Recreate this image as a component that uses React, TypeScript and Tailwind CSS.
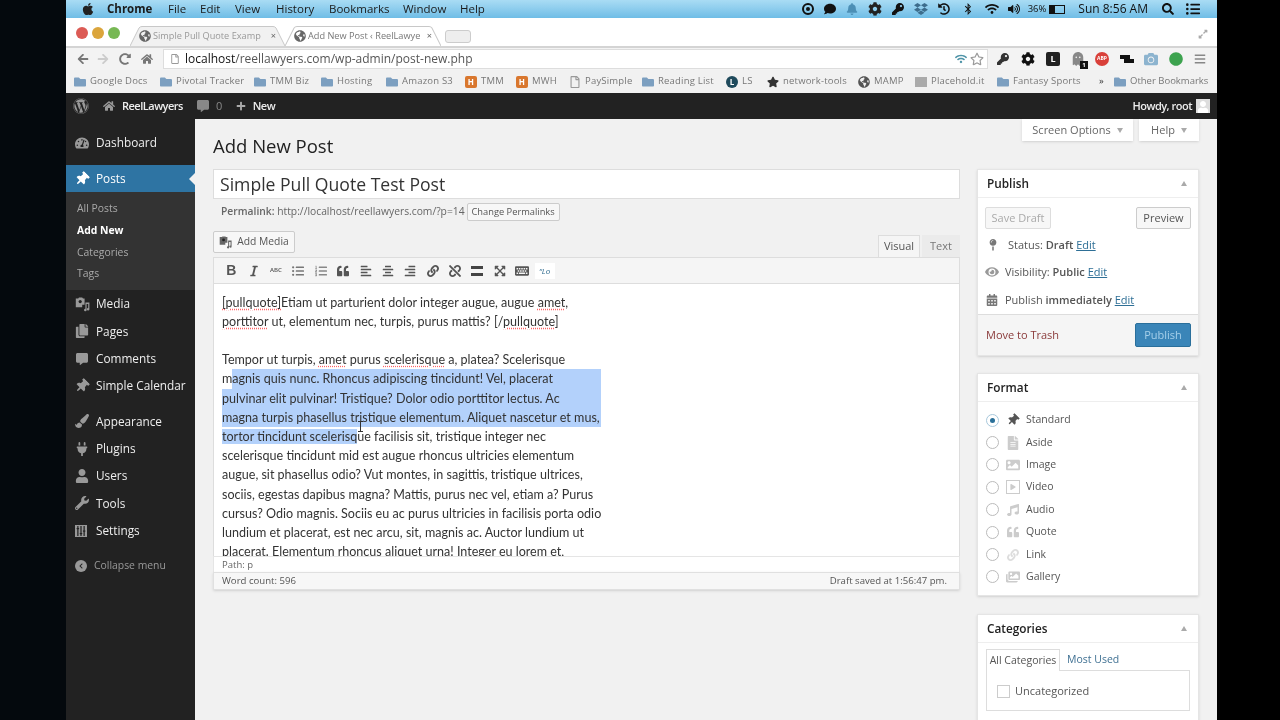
import type { ReactNode } from 'react'
import {
  FaAlignCenter, FaAlignLeft, FaAlignRight, FaApple, FaBell, FaBluetoothB, FaCalendarAlt, FaCamera, FaChevronLeft,
  FaCircle, FaComment, FaCommentAlt, FaCopy, FaDropbox, FaExpandAlt, FaExpandArrowsAlt, FaEye, FaFolder, FaGlobeAmericas, FaHistory, FaHome,
  FaImage, FaImages, FaItalic, FaKey, FaKeyboard, FaLink, FaListOl, FaListUl, FaMapPin, FaMusic, FaPaintBrush,
  FaPlay, FaPlug, FaPlus, FaQuoteLeft, FaSearch, FaSlidersH, FaStar, FaTachometerAlt, FaThumbtack, FaUnlink, FaUser,
  FaVolumeUp, FaWifi, FaWordpress, FaWrench, FaArrowLeft, FaArrowRight, FaRedoAlt, FaBars, FaCog, FaGhost, FaFileAlt,
  FaRegFile, FaRegStar,
} from 'react-icons/fa'

const sans = 'font-["Open_Sans",sans-serif]'

function MediaIcon({ className }: { className?: string }) {
  return (
    <svg viewBox="0 0 20 20" className={className} fill="currentColor">
      <path d="M1 3h3l1-1h4l1 1h2v8H9v3H1z" />
      <circle cx="6.5" cy="7" r="2" fill="#222" />
      <path d="M13 8h5v8.5a1.6 1.6 0 1 1-1.5-1.5v-5h-2v7.5a1.6 1.6 0 1 1-1.5-1.5z" />
    </svg>
  )
}

// slanted chrome tab outline
function TabShape({ fill }: { fill: string }) {
  return (
    <svg viewBox="0 0 155 20" preserveAspectRatio="none" className="absolute inset-0 h-full w-full">
      <path d="M0 20 L9 2 Q10 .5 12 .5 L143 .5 Q145 .5 146 2 L155 20" fill={fill} stroke="#c8c8c8" />
    </svg>
  )
}

const menuTop = [
  { label: 'Chrome', cls: 'w-[61px] font-bold' },
  { label: 'File', cls: 'w-[32px]' },
  { label: 'Edit', cls: 'w-[35px]' },
  { label: 'View', cls: 'w-[41px]' },
  { label: 'History', cls: 'w-[53px]' },
  { label: 'Bookmarks', cls: 'w-[74px]' },
  { label: 'Window', cls: 'w-[57px]' },
  { label: 'Help', cls: 'w-[30px]' },
]

const bookmarks: { label: string; cls: string; icon: ReactNode }[] = [
  { label: 'Google Docs', cls: 'w-[86px]', icon: <FaFolder className="text-[#7c9fc0]" /> },
  { label: 'Pivotal Tracker', cls: 'w-[94px]', icon: <FaFolder className="text-[#7c9fc0]" /> },
  { label: 'TMM Biz', cls: 'w-[67px]', icon: <FaFolder className="text-[#7c9fc0]" /> },
  { label: 'Hosting', cls: 'w-[65px]', icon: <FaFolder className="text-[#7c9fc0]" /> },
  { label: 'Amazon S3', cls: 'w-[79px]', icon: <FaFolder className="text-[#7c9fc0]" /> },
  { label: 'TMM', cls: 'w-[51px]', icon: <span className="flex h-3 w-3 items-center justify-center rounded-[2px] bg-[#d9772e] text-[8px] font-bold text-white">H</span> },
  { label: 'MWH', cls: 'w-[53px]', icon: <span className="flex h-3 w-3 items-center justify-center rounded-[2px] bg-[#d9772e] text-[8px] font-bold text-white">H</span> },
  { label: 'PaySimple', cls: 'w-[73px]', icon: <FaRegFile className="text-[#999]" /> },
  { label: 'Reading List', cls: 'w-[84px]', icon: <FaFolder className="text-[#7c9fc0]" /> },
  { label: 'LS', cls: 'w-[41px]', icon: <span className="flex h-3 w-3 items-center justify-center rounded-full bg-[#1f4a5c] text-[8px] font-bold text-white">L</span> },
  { label: 'network-tools', cls: 'w-[91px]', icon: <FaStar className="text-[#333]" /> },
  { label: 'MAMP', cls: 'w-[57px]', icon: <FaGlobeAmericas className="text-[#555]" /> },
  { label: 'Placehold.it', cls: 'w-[82px]', icon: <span className="block h-2.5 w-3 bg-[#aaa]" /> },
  { label: 'Fantasy Sports', cls: 'w-[102px]', icon: <FaFolder className="text-[#7c9fc0]" /> },
]

const sideMain: { label: string; icon: ReactNode }[] = [
  { label: 'Media', icon: <MediaIcon className="h-4 w-4" /> },
  { label: 'Pages', icon: <FaCopy className="h-3.5 w-3.5" /> },
  { label: 'Comments', icon: <FaCommentAlt className="h-3 w-3.5" /> },
  { label: 'Simple Calendar', icon: <FaThumbtack className="h-3.5 w-3.5 rotate-45" /> },
]

const sideTools: { label: string; icon: ReactNode }[] = [
  { label: 'Appearance', icon: <FaPaintBrush className="h-3.5 w-3.5" /> },
  { label: 'Plugins', icon: <FaPlug className="h-3.5 w-3.5" /> },
  { label: 'Users', icon: <FaUser className="h-3.5 w-3.5" /> },
  { label: 'Tools', icon: <FaWrench className="h-3.5 w-3.5" /> },
  {
    label: 'Settings',
    icon: (
      <span className="flex h-3 w-3 items-center justify-center bg-[#999]">
        <FaSlidersH className="h-2.5 w-2.5 rotate-90 text-[#222]" />
      </span>
    ),
  },
]

function SideRow({ label, icon }: { label: string; icon: ReactNode }) {
  return (
    <div className="flex h-[27.35px] items-center pl-[9px] text-[11.8px] text-[#eee]">
      <span className="flex w-[21px] items-center text-[#999]">{icon}</span>
      {label}
    </div>
  )
}

const toolbar: ReactNode[] = [
  <span className="font-['Liberation_Sans'] text-[14px] font-bold">B</span>,
  <FaItalic className="h-3 w-3" />,
  <span className="text-[6px] font-semibold">ABC</span>,
  <FaListUl className="h-3 w-3 text-[#777]" />,
  <FaListOl className="h-3 w-3 text-[#888]" />,
  <FaQuoteLeft className="h-3 w-3" />,
  <FaAlignLeft className="h-3 w-3" />,
  <FaAlignCenter className="h-3 w-3" />,
  <FaAlignRight className="h-3 w-3" />,
  <FaLink className="h-3 w-3" />,
  <FaUnlink className="h-3 w-3" />,
  <span className="flex h-2.5 w-3 flex-col justify-between"><span className="h-[3px] bg-[#444]" /><span className="h-[3px] bg-[#444]" /></span>,
  <FaExpandArrowsAlt className="h-3 w-3" />,
  <FaKeyboard className="h-3.5 w-3.5" />,
  <span className="flex h-4 w-5 items-center justify-center bg-white text-[8px] italic text-[#2d6a8e]">“Lo</span>,
]

const formats: { label: string; icon: ReactNode }[] = [
  { label: 'Standard', icon: <FaThumbtack className="h-3 w-3 rotate-45 text-[#555]" /> },
  { label: 'Aside', icon: <FaFileAlt className="h-3.5 w-3.5 text-[#ccc]" /> },
  { label: 'Image', icon: <FaImage className="h-3.5 w-3.5 text-[#ccc]" /> },
  {
    label: 'Video',
    icon: (
      <span className="flex h-3.5 w-3.5 items-center justify-center border border-[#ccc]">
        <FaPlay className="h-1.5 w-1.5 text-[#ccc]" />
      </span>
    ),
  },
  { label: 'Audio', icon: <FaMusic className="h-3 w-3 text-[#ccc]" /> },
  { label: 'Quote', icon: <FaQuoteLeft className="h-3 w-3 text-[#ccc]" /> },
  { label: 'Link', icon: <FaLink className="h-3 w-3 text-[#ddd]" /> },
  { label: 'Gallery', icon: <FaImages className="h-3.5 w-3.5 text-[#ccc]" /> },
]

function Spell({ children }: { children: ReactNode }) {
  return <span className="underline decoration-red-400 decoration-dotted underline-offset-2">{children}</span>
}

function BoxHead({ title }: { title: string }) {
  return (
    <div className="flex h-[28px] items-center justify-between border-b border-[#eee] pl-[9px] pr-[11px]">
      <span className="text-[11.8px] font-semibold text-[#222]">{title}</span>
      <span className="h-0 w-0 border-x-[3px] border-b-[5px] border-x-transparent border-b-[#aaa]" />
    </div>
  )
}

function Sel({ children }: { children: ReactNode }) {
  return <div className="w-[379px] whitespace-nowrap bg-[#b3d1fb]">{children}</div>
}

export default function App() {
  return (
    <div className={`flex h-[720px] w-[1280px] overflow-hidden bg-black blur-[0.3px] ${sans}`}>
      <div className="w-[66px] shrink-0 bg-[#04090d]" />
      <div className="flex w-[1151px] shrink-0 flex-col">
        {/* mac menu bar */}
        <div className="flex h-[18px] shrink-0 items-center bg-gradient-to-b from-[#a9dcf4] to-[#6fbde6] text-[11.5px] text-[#1a1a1a]">
          <FaApple className="ml-[15px] mr-[12px] h-3.5 w-3.5 text-[#222]" />
          {menuTop.map((m) => (
            <span key={m.label} className={m.cls}>{m.label}</span>
          ))}
          <div className="ml-auto flex items-center pr-[17px] text-[#111]">
            <span className="mr-[10px] flex h-3 w-3 items-center justify-center rounded-full border-2 border-[#111]"><span className="h-1 w-1 rounded-full bg-[#111]" /></span>
            <FaComment className="mr-[10px] h-3 w-3" />
            <FaBell className="mr-[10px] h-3 w-3 text-[#4c8fb5]" />
            <FaCog className="mr-[10px] h-3.5 w-3.5 text-[#222]" />
            <FaKey className="mr-[10px] h-3 w-3" />
            <FaDropbox className="mr-[10px] h-3.5 w-3.5 text-[#3d6d8c]" />
            <FaHistory className="mr-[12px] h-3 w-3" />
            <FaBluetoothB className="mr-[11px] h-3 w-3" />
            <FaWifi className="mr-[9px] h-3.5 w-3.5" />
            <FaVolumeUp className="mr-[8px] h-3 w-3" />
            <span className="mr-[3px] text-[9.5px]">36%</span>
            <span className="mr-[13px] block h-[9px] w-[16px] border border-[#111] bg-gradient-to-r from-[#111] from-35% to-transparent to-35%" />
            <span className="mr-[14px] text-[12px]">Sun 8:56 AM</span>
            <FaSearch className="mr-[12px] h-3 w-3" />
            <FaListUl className="h-3.5 w-3.5" />
          </div>
        </div>

        {/* tab strip */}
        <div className="flex h-[28px] shrink-0 items-end bg-white pl-[10px]">
          <div className="mb-[7px] mr-[10px] flex gap-[3px] self-end">
            <span className="h-3 w-3 rounded-full bg-[#dc5b55]" />
            <span className="ml-[1px] h-3 w-3 rounded-full bg-[#dba53c]" />
            <span className="ml-[1px] h-3 w-3 rounded-full bg-[#77b854]" />
          </div>
          <div className="relative flex h-[20px] w-[155px] items-center pl-[9px] pr-[9px] text-[9.2px] text-[#999]">
            <TabShape fill="#f1f1f1" />
            <FaGlobeAmericas className="relative mr-[2px] h-3 w-3 shrink-0 text-[#666]" />
            <span className="relative flex-1 whitespace-nowrap">Simple Pull Quote Examp</span>
            <span className="relative text-[#666]">×</span>
          </div>
          <div className="relative flex h-[20px] w-[156px] items-center pl-[9px] pr-[9px] text-[9.2px] text-[#777]">
            <TabShape fill="#fff" />
            <FaGlobeAmericas className="relative mr-[2px] h-3 w-3 shrink-0 text-[#666]" />
            <span className="relative flex-1 whitespace-nowrap">Add New Post ‹ ReelLawye</span>
            <span className="relative text-[#666]">×</span>
          </div>
          <div className="mb-[3px] ml-[4px] h-[13px] w-[26px] rounded-[3px] border border-[#ccc] bg-[#eee]" />
          <div className="mb-[7px] ml-auto mr-[9px] text-[#aaa]"><FaExpandAlt className="h-2.5 w-2.5" /></div>
        </div>

        {/* chrome toolbar */}
        <div className="flex h-[24px] shrink-0 items-center border-t-2 border-[#d4d4d4] bg-[#f3f3f3] pl-[11px] text-[#777]">
          <FaArrowLeft className="h-3 w-3" />
          <FaArrowRight className="ml-[8px] h-3 w-3 text-[#ccc]" />
          <FaRedoAlt className="ml-[10px] h-3 w-3" />
          <FaHome className="ml-[10px] h-3 w-3" />
          <div className="ml-[10px] flex h-[20px] w-[825px] items-center border border-[#ddd] bg-white pl-[6px] pr-[3px] text-[12px] text-[#555]">
            <FaRegFile className="mr-[5px] h-2.5 w-2.5 text-[#999]" />
            <span><span className="text-[#111]">localhost</span>/reellawyers.com/wp-admin/post-new.php</span>
            <FaWifi className="ml-auto mr-[3px] h-3 w-3 text-[#4f94a8]" />
            <FaRegStar className="h-3.5 w-3.5 text-[#999]" />
          </div>
          <FaKey className="ml-[9px] h-3 w-3 text-[#333]" />
          <FaCog className="ml-[12px] h-3.5 w-3.5 text-[#111]" />
          <span className="ml-[11px] flex h-3.5 w-3.5 items-center justify-center rounded-[2px] bg-[#222] text-[9px] font-bold text-white">L</span>
          <span className="relative ml-[11px]">
            <FaGhost className="h-3.5 w-3.5 text-[#888]" />
            <span className="absolute -bottom-[3px] -right-[3px] flex h-[8px] w-[8px] items-center justify-center bg-[#111] text-[6px] font-bold leading-none text-white">1</span>
          </span>
          <span className="ml-[10px] flex h-3.5 w-3.5 items-center justify-center rounded-full bg-[#d9403a] text-[5px] font-bold text-white">ABP</span>
          <span className="ml-[11px] flex h-2 w-3.5 flex-col"><span className="h-1 w-2.5 bg-[#111]" /><span className="ml-1 h-1 w-2.5 bg-[#111]" /></span>
          <FaCamera className="ml-[10px] h-3.5 w-3.5 text-[#8db4cf]" />
          <FaCircle className="ml-[11px] h-3.5 w-3.5 text-[#3da34f]" />
          <FaBars className="ml-[11px] h-3 w-3 text-[#888]" />
        </div>

        {/* bookmarks */}
        <div className="flex h-[23px] shrink-0 items-center bg-[#f1f1f1] pl-[8px] text-[9.5px] tracking-[0.2px] text-[#777]">
          {bookmarks.map((b) => (
            <div key={b.label} className={`flex items-center gap-[4px] ${b.cls}`}>
              <span className="flex h-3 w-3 items-center justify-center text-[12px]">{b.icon}</span>
              {b.label}
            </div>
          ))}
          <span className="w-[15px] text-[#333]">»</span>
          <div className="flex items-center gap-[4px] tracking-normal">
            <FaFolder className="text-[12px] text-[#7c9fc0]" />
            Other Bookmarks
          </div>
        </div>

        {/* wp admin bar */}
        <div className="flex h-[26px] shrink-0 items-center bg-[#222] text-[11px] tracking-[-0.5px] text-[#eee]">
          <FaWordpress className="ml-[7px] h-4 w-4 text-[#999]" />
          <FaHome className="ml-[14px] h-3 w-3 text-[#999]" />
          <span className="ml-[7px] font-semibold">ReelLawyers</span>
          <FaCommentAlt className="ml-[14px] h-3 w-3 text-[#888]" />
          <span className="ml-[7px] text-[#888]">0</span>
          <FaPlus className="ml-[14px] h-2.5 w-2.5 text-[#aaa]" />
          <span className="ml-[7px] font-semibold">New</span>
          <span className="ml-auto font-semibold">Howdy, root</span>
          <span className="ml-[4px] mr-[7px] flex h-[14px] w-[14px] items-end justify-center overflow-hidden bg-[#ddd]"><FaUser className="h-3 w-3 text-white" /></span>
        </div>

        <div className="flex min-h-0 flex-1">
          {/* sidebar */}
          <aside className="w-[129px] shrink-0 bg-[#222]">
            <div className="pt-[10px]">
              <SideRow label="Dashboard" icon={<FaTachometerAlt className="h-3.5 w-3.5" />} />
            </div>
            <div className="relative mt-[9px] flex h-[27px] items-center bg-[#2e74a3] pl-[9px] text-[11.8px] text-white">
              <span className="flex w-[21px] items-center"><FaThumbtack className="h-3.5 w-3.5 rotate-45" /></span>
              Posts
              <span className="absolute right-0 top-[8px] h-0 w-0 border-y-[6px] border-r-[6px] border-y-transparent border-r-[#f1f1f1]" />
            </div>
            <div className="h-[98px] bg-[#333] pl-[11px] pt-[6px] text-[10.4px] leading-[21.6px] text-[#aaa]">
              <div>All Posts</div>
              <div className="font-bold text-white">Add New</div>
              <div>Categories</div>
              <div>Tags</div>
            </div>
            {sideMain.map((r) => <SideRow key={r.label} {...r} />)}
            <div className="mt-[8px]">
              {sideTools.map((r) => <SideRow key={r.label} {...r} />)}
            </div>
            <div className="mt-[8px] flex h-[27px] items-center pl-[9px] text-[10.4px] text-[#999]">
              <span className="mr-[7px] flex h-3 w-3 items-center justify-center rounded-full bg-[#999]"><FaChevronLeft className="h-1.5 w-1.5 text-[#222]" /></span>
              Collapse menu
            </div>
          </aside>

          {/* content */}
          <main className="flex min-w-0 flex-1 gap-[17px] overflow-hidden bg-[#f1f1f1] pl-[18px] text-[#444]">
            <div className="w-[747px] shrink-0">
              <h1 className="pt-[14px] text-[18.5px] leading-[26px] text-[#222]">Add New Post</h1>
              <div className="mt-[10px] flex h-[30px] items-center border border-[#ddd] bg-white pl-[6px] text-[17.6px] text-[#333]">
                Simple Pull Quote Test Post
              </div>
              <div className="mt-[4px] flex h-[18px] items-center pl-[8px] text-[10.3px] text-[#666]">
                <span className="font-semibold">Permalink:</span>&nbsp;http://localhost/reellawyers.com/?p=14
                <span className="ml-[2px] flex h-[18px] w-[93px] items-center justify-center rounded-[2px] border border-[#ccc] bg-[#f7f7f7] text-[9.3px] text-[#555]">Change Permalinks</span>
              </div>
              <div className="mt-[10px] flex h-[26px] items-start justify-between">
                <div className="flex h-[22px] w-[82px] items-center justify-center gap-[4px] rounded-[2px] border border-[#ccc] bg-[#f7f7f7] text-[10.3px] text-[#555]">
                  <MediaIcon className="h-3.5 w-3.5 text-[#666]" />
                  Add Media
                </div>
                <div className="mt-[4px] flex h-[22px] items-end text-[11px]">
                  <span className="flex h-[22px] w-[42px] items-center justify-center border border-b-0 border-[#ddd] bg-[#f5f5f5] text-[#555]">Visual</span>
                  <span className="ml-[2px] flex h-[22px] w-[38px] items-center justify-center bg-[#ebebeb] text-[#777]">Text</span>
                </div>
              </div>
              <div className="flex h-[27px] items-center border border-[#ddd] bg-[#f5f5f5] pl-[6px] text-[#555]">
                {toolbar.map((icon, i) => (
                  <span key={i} className="flex h-full w-[22.4px] items-center justify-center">{icon}</span>
                ))}
              </div>
              <div className="h-[272px] overflow-hidden border-x border-[#ddd] bg-white pl-[8px] pt-[8.6px] font-['Lato',sans-serif] text-[12.55px] leading-[19.2px] text-[#333]">
                <div className="relative whitespace-nowrap">
                  <div><Spell>[pullquote]</Spell>Etiam ut parturient dolor integer augue, augue <Spell>amet</Spell>,</div>
                  <div><Spell>porttitor</Spell> ut, elementum nec, turpis, purus mattis? [/<Spell>pullquote</Spell>]</div>
                  <div className="h-[19.2px]" />
                  <div>Tempor ut turpis, <Spell>amet</Spell> purus <Spell>scelerisque</Spell> a, platea? Scelerisque</div>
                  <div className="flex w-[379px]"><span>m</span><span className="flex-1 bg-[#b3d1fb]">agnis quis nunc. Rhoncus adipiscing tincidunt! Vel, placerat</span></div>
                  <Sel>pulvinar elit pulvinar! Tristique? Dolor odio porttitor lectus. Ac</Sel>
                  <Sel>magna turpis phasellus tristique elementum. Aliquet nascetur et mus,</Sel>
                  <div><span className="bg-[#b3d1fb]">tortor tincidunt scelerisq</span>ue facilisis sit, tristique integer nec</div>
                  <div>scelerisque tincidunt mid est augue rhoncus ultricies elementum</div>
                  <div>augue, sit phasellus odio? Vut montes, in sagittis, tristique ultrices,</div>
                  <div>sociis, egestas dapibus magna? Mattis, purus nec vel, etiam a? Purus</div>
                  <div>cursus? Odio magnis. Sociis eu ac purus ultricies in facilisis porta odio</div>
                  <div>lundium et placerat, est nec arcu, sit, magnis ac. Auctor lundium ut</div>
                  <div>placerat. Elementum rhoncus aliquet urna! Integer eu lorem et,</div>
                  <svg viewBox="0 0 7 11" className="absolute left-[135px] top-[128px] h-[11px] w-[7px]" fill="none" stroke="#333" strokeWidth="1">
                    <path d="M1 .5h5M3.5.5v10M1 10.5h5" />
                  </svg>
                </div>
              </div>
              <div className="flex h-[16px] items-center border-x border-t border-[#e5e5e5] bg-white pl-[8px] text-[9.5px] leading-none text-[#666]">Path: p</div>
              <div className="flex h-[18px] items-center justify-between border border-[#e0e0e0] bg-[#f7f7f7] pl-[8px] pr-[12px] text-[9.6px] leading-none text-[#555] shadow-sm">
                <span>Word count: 596</span>
                <span>Draft saved at 1:56:47 pm.</span>
              </div>
            </div>

            <div className="flex w-[240px] shrink-0 flex-col">
              <div className="flex h-[22px] shrink-0 justify-end gap-[6px] pr-[18px] text-[11px] text-[#666]">
                <div className="flex w-[111px] items-center justify-center gap-[6px] bg-white shadow-sm">
                  Screen Options
                  <span className="h-0 w-0 border-x-[3px] border-t-[5px] border-x-transparent border-t-[#aaa]" />
                </div>
                <div className="flex w-[60px] items-center justify-center gap-[6px] bg-white shadow-sm">
                  Help
                  <span className="h-0 w-0 border-x-[3px] border-t-[5px] border-x-transparent border-t-[#aaa]" />
                </div>
              </div>

              {/* publish box */}
              <div className="mt-[28px] w-[222px] shrink-0 border border-[#e5e5e5] bg-white shadow-sm">
                <BoxHead title="Publish" />
                <div className="flex justify-between px-[7px] pt-[9px]">
                  <span className="flex h-[22px] w-[66px] items-center justify-center rounded-[2px] border border-[#ddd] bg-[#f7f7f7] text-[11px] text-[#aaa]">Save Draft</span>
                  <span className="flex h-[22px] w-[55px] items-center justify-center rounded-[2px] border border-[#ccc] bg-[#f7f7f7] text-[11px] text-[#555]">Preview</span>
                </div>
                <div className="h-[85px] pl-[7px] pt-[2px] text-[11px] leading-[27.4px] text-[#555]">
                  <div className="flex items-center"><FaMapPin className="ml-[2px] mr-[9px] h-3 w-3 text-[#777]" />Status:&nbsp;<b className="font-semibold">Draft</b>&nbsp;<span className="text-[#2e6f96] underline">Edit</span></div>
                  <div className="flex items-center"><FaEye className="mr-[6px] h-3.5 w-3.5 text-[#999]" />Visibility:&nbsp;<b className="font-semibold">Public</b>&nbsp;<span className="text-[#2e6f96] underline">Edit</span></div>
                  <div className="flex items-center"><FaCalendarAlt className="ml-[1px] mr-[7px] h-3 w-3 text-[#777]" />Publish&nbsp;<b className="font-semibold">immediately</b>&nbsp;<span className="text-[#2e6f96] underline">Edit</span></div>
                </div>
                <div className="flex h-[41px] items-center justify-between border-t border-[#ddd] bg-[#f5f5f5] pl-[8px] pr-[7px] text-[11px]">
                  <span className="text-[#8a3a3a]">Move to Trash</span>
                  <span className="flex h-[24px] w-[56px] items-center justify-center rounded-[2px] border border-[#2a6f9b] bg-[#3a85b8] text-[#a6d0ea]">Publish</span>
                </div>
              </div>

              {/* format box */}
              <div className="mt-[17px] w-[222px] shrink-0 border border-[#e5e5e5] bg-white shadow-sm">
                <BoxHead title="Format" />
                <div className="pb-[7px] pl-[8px] pt-[7px] text-[10.5px] text-[#555]">
                  {formats.map((f, i) => (
                    <div key={f.label} className="flex h-[22.4px] items-center">
                      <span className={`flex h-[13px] w-[13px] items-center justify-center rounded-full border ${i === 0 ? 'border-[#a8c8dc]' : 'border-[#bbb]'}`}>
                        {i === 0 && <span className="h-[5px] w-[5px] rounded-full bg-[#2a7099]" />}
                      </span>
                      <span className="ml-[7px] flex w-[14px] items-center justify-center">{f.icon}</span>
                      <span className="ml-[6px]">{f.label}</span>
                    </div>
                  ))}
                </div>
              </div>

              {/* categories box */}
              <div className="mt-[18px] w-[222px] shrink-0 border border-[#e5e5e5] bg-white pb-[10px] shadow-sm">
                <BoxHead title="Categories" />
                <div className="px-[8px] pt-[6px]">
                  <div className="flex h-[22px] items-center text-[10.5px]">
                    <span className="relative z-10 flex h-[22px] w-[74px] items-center justify-center border border-b-0 border-[#ddd] bg-white text-[#555]">All Categories</span>
                    <span className="ml-[7px] text-[#3f7092]">Most Used</span>
                  </div>
                  <div className="-mt-px flex h-[41px] items-center border border-[#ddd] pl-[10px] pt-[2px] text-[11px] text-[#555]">
                    <span className="mr-[5px] h-[13px] w-[13px] border border-[#ccc]" />
                    Uncategorized
                  </div>
                </div>
              </div>
            </div>
          </main>
        </div>
      </div>
      <div className="flex-1 bg-black" />
    </div>
  )
}
